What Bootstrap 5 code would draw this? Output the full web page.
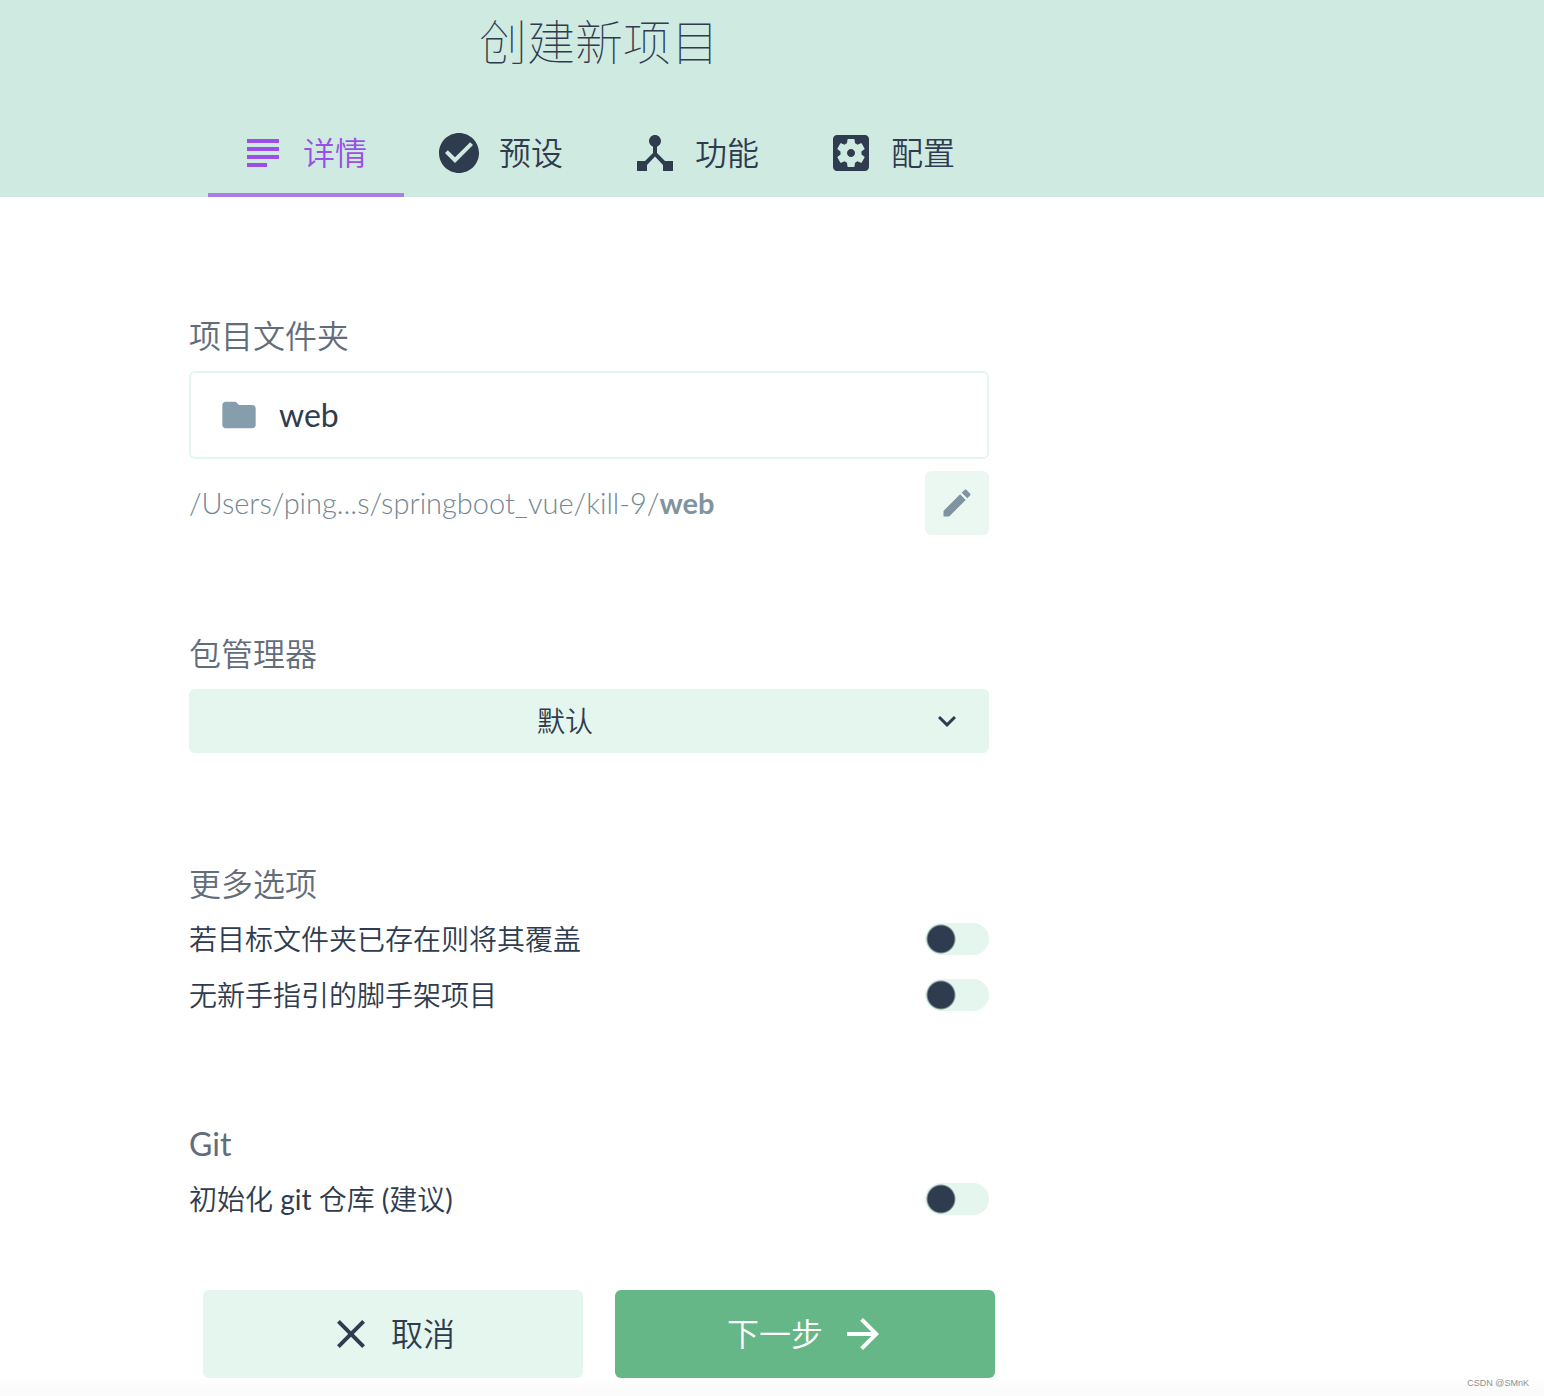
<!DOCTYPE html>
<html lang="zh-CN">
<head>
<meta charset="utf-8">
<meta name="viewport" content="width=device-width, initial-scale=1">
<title>创建新项目</title>
<link href="https://cdn.jsdelivr.net/npm/bootstrap@5.3.0/dist/css/bootstrap.min.css" rel="stylesheet">
<style>
:root { --ink: #2f3c4f; --soft: #626d7c; --mint: #e4f6ed; --slate: #8093a0; }
body { font-family: Lato, "Noto Sans CJK SC", sans-serif; color: var(--ink); min-height: 100vh; background: linear-gradient(to top, #f9f9f9 0, #fff 20px) no-repeat #fff; }
svg { display: block; fill: currentColor; flex: none; }
.shell { max-width: 1200px; }
.top-band { background: #cfeae0; }
.page-title { font-size: 48px; line-height: 72px; font-weight: 100; padding: 6px 2px 31px 0; }
.wizard-tabs .nav-link { width: 196px; height: 88px; padding: 4px 6px 0 0; gap: 16px; border-radius: 0; border-bottom: 4px solid transparent; color: var(--ink); font-size: 32px; line-height: 40px; font-weight: 350; }
.wizard-tabs .nav-link.active { color: #9b4ee8; border-color: #a87fe6; }
.form-body { padding: 119px 22px 0 0; }
.form-inner { max-width: 800px; }
.group-title { display: block; font-size: 32px; line-height: 40px; font-weight: 350; color: var(--soft); margin: 0; }
.latin { font-weight: 400; }
.field-box { margin-top: 15px; height: 88px; padding: 0 28px; gap: 20px; border: 2px solid var(--mint); border-radius: 6px; color: #869eac; }
.field-box input { font-size: 32px; font-weight: 400; color: var(--ink); padding: 0; box-shadow: none; background: none; }
.path-line { margin-top: 12px; font-size: 29px; line-height: 40px; font-weight: 300; color: #738794; }
.path-line b { font-weight: 700; color: var(--slate); }
.edit-btn { width: 64px; height: 64px; background: #ebf8f2; border-radius: 6px; color: var(--slate); }
.section-gap { margin-top: 99px; }
.section-gap-lg { margin-top: 111px; }
.section-gap-xl { margin-top: 101px; }
.pick { margin-top: 15px; }
.pick select { height: 64px; border: 0; border-radius: 6px; background: var(--mint); color: var(--ink); font-size: 28px; font-weight: 350; text-align: center; text-align-last: center; padding: 0 48px 0 0; }
.pick svg { position: absolute; right: 24px; top: 14px; pointer-events: none; }
.option-list { margin-top: 7px; }
.option-row { height: 56px; font-size: 28px; line-height: 40px; font-weight: 350; }
.option-row .form-check-input { width: 64px; height: 32px; margin: 0; float: none; border: 0; border-radius: 16px; background: radial-gradient(circle at 16px 16px, var(--ink) 13px, transparent 15px) var(--mint); }
.option-row .form-check-input:checked { background: radial-gradient(circle at 48px 16px, #fff 13px, transparent 15px) #65b787; }
.actions { max-width: 794px; padding-top: 63px; padding-bottom: 18px; padding-right: 2px; gap: 32px; }
.actions .btn { height: 88px; flex: 1 1 380px; gap: 16px; border: 0; border-radius: 6px; font-size: 32px; line-height: 40px; font-weight: 350; }
.actions .btn-cancel { background: var(--mint); color: var(--ink); padding: 0 4px 0 0; }
.actions .btn-next { background: #65b787; color: #fff; padding: 0 0 0 4px; }
.credit { position: absolute; right: 15px; bottom: 6px; font: 9px/14px "Liberation Sans", sans-serif; color: #909090; }
</style>
</head>
<body class="position-relative">
<header class="top-band">
  <div class="shell">
    <h1 class="page-title text-center m-0">创建新项目</h1>
    <nav class="nav wizard-tabs justify-content-center" aria-label="步骤">
      <a class="nav-link active d-flex align-items-center justify-content-center" href="#" aria-current="step"><svg width="48" height="48" viewBox="0 0 24 24"><path d="M14 17H4v2h10v-2zm6-8H4v2h16V9zM4 15h16v-2H4v2zM4 5v2h16V5H4z"/></svg><span>详情</span></a>
      <a class="nav-link d-flex align-items-center justify-content-center" href="#"><svg width="48" height="48" viewBox="0 0 24 24"><path d="M12 2C6.48 2 2 6.48 2 12s4.48 10 10 10 10-4.48 10-10S17.52 2 12 2zm-2 15l-5-5 1.41-1.41L10 14.17l7.59-7.59L19 8l-9 9z"/></svg><span>预设</span></a>
      <a class="nav-link d-flex align-items-center justify-content-center" href="#"><svg width="48" height="48" viewBox="0 0 24 24"><path d="M17 16l-4-4V8.82C14.16 8.4 15 7.3 15 6c0-1.66-1.34-3-3-3S9 4.34 9 6c0 1.3.84 2.4 2 2.82V12l-4 4H3v5h5v-3.05l4-4.2 4 4.2V21h5v-5h-4z"/></svg><span>功能</span></a>
      <a class="nav-link d-flex align-items-center justify-content-center" href="#"><svg width="48" height="48" viewBox="0 0 24 24"><path d="M12 10c-1.1 0-2 .9-2 2s.9 2 2 2 2-.9 2-2-.9-2-2-2zm7-7H5c-1.11 0-2 .9-2 2v14c0 1.1.89 2 2 2h14c1.11 0 2-.9 2-2V5c0-1.1-.89-2-2-2zm-1.75 9c0 .23-.02.46-.05.68l1.48 1.16c.13.11.17.3.08.45l-1.4 2.42c-.09.15-.27.21-.43.15l-1.74-.7c-.36.28-.76.51-1.18.69l-.26 1.85c-.03.17-.18.3-.35.3h-2.8c-.17 0-.32-.13-.35-.29l-.26-1.85c-.43-.18-.82-.41-1.18-.69l-1.74.7c-.16.06-.34 0-.43-.15l-1.4-2.42c-.09-.15-.05-.34.08-.45l1.48-1.16c-.03-.23-.05-.46-.05-.69 0-.23.02-.46.05-.68l-1.48-1.16c-.13-.11-.17-.3-.08-.45l1.4-2.42c.09-.15.27-.21.43-.15l1.74.7c.36-.28.76-.51 1.18-.69l.26-1.85c.03-.17.18-.3.35-.3h2.8c.17 0 .32.13.35.29l.26 1.85c.43.18.82.41 1.18.69l1.74-.7c.16-.06.34 0 .43.15l1.4 2.42c.09.15.05.34-.08.45l-1.48 1.16c.03.23.05.46.05.69z"/></svg><span>配置</span></a>
    </nav>
  </div>
</header>
<main class="shell">
  <form>
    <div class="form-body">
      <div class="form-inner mx-auto">
        <section>
          <label class="group-title" for="folder">项目文件夹</label>
          <div class="field-box d-flex align-items-center">
            <svg width="40" height="40" viewBox="0 0 24 24"><path d="M10 4H4c-1.1 0-1.99.9-1.99 2L2 18c0 1.1.9 2 2 2h16c1.1 0 2-.9 2-2V8c0-1.1-.9-2-2-2h-8l-2-2z"/></svg>
            <input class="form-control border-0" id="folder" type="text" value="web">
          </div>
          <div class="path-line d-flex align-items-center justify-content-between">
            <span>/Users/ping...s/springboot_vue/kill-9/<b>web</b></span>
            <button class="btn edit-btn border-0 p-0 d-flex align-items-center justify-content-center" type="button" aria-label="编辑"><svg width="36" height="36" viewBox="0 0 24 24"><path d="M3 17.25V21h3.75L17.81 9.94l-3.75-3.75L3 17.25zM20.71 7.04c.39-.39.39-1.02 0-1.41l-2.34-2.34c-.39-.39-1.02-.39-1.41 0l-1.83 1.83 3.75 3.75 1.83-1.83z"/></svg></button>
          </div>
        </section>
        <section class="section-gap">
          <label class="group-title" for="manager">包管理器</label>
          <div class="pick position-relative">
            <select class="form-select" id="manager"><option>默认</option></select>
            <svg width="36" height="36" viewBox="0 0 24 24"><path d="M7.41 8.59L12 13.17l4.59-4.58L18 10l-6 6-6-6 1.41-1.41z"/></svg>
          </div>
        </section>
        <section class="section-gap-lg">
          <h2 class="group-title">更多选项</h2>
          <div class="option-list">
            <div class="option-row form-switch d-flex align-items-center justify-content-between p-0"><label for="overwrite">若目标文件夹已存在则将其覆盖</label><input class="form-check-input" type="checkbox" role="switch" id="overwrite"></div>
            <div class="option-row form-switch d-flex align-items-center justify-content-between p-0"><label for="bare">无新手指引的脚手架项目</label><input class="form-check-input" type="checkbox" role="switch" id="bare"></div>
          </div>
        </section>
        <section class="section-gap-xl">
          <h2 class="group-title latin">Git</h2>
          <div class="option-list">
            <div class="option-row form-switch d-flex align-items-center justify-content-between p-0"><label for="git">初始化<span class="latin"> git </span>仓库<span class="latin"> (</span>建议<span class="latin">)</span></label><input class="form-check-input" type="checkbox" role="switch" id="git"></div>
          </div>
        </section>
      </div>
    </div>
    <div class="actions d-flex mx-auto">
      <button class="btn btn-cancel d-flex align-items-center justify-content-center" type="button"><svg width="48" height="48" viewBox="0 0 24 24"><path d="M19 6.41L17.59 5 12 10.59 6.41 5 5 6.41 10.59 12 5 17.59 6.41 19 12 13.41 17.59 19 19 17.59 13.41 12z"/></svg><span>取消</span></button>
      <button class="btn btn-next d-flex align-items-center justify-content-center" type="submit"><span>下一步</span><svg width="48" height="48" viewBox="0 0 24 24"><path d="M12 4l-1.41 1.41L16.17 11H4v2h12.17l-5.58 5.59L12 20l8-8z"/></svg></button>
    </div>
  </form>
</main>
<small class="credit">CSDN @SMnK</small>
<script src="https://cdn.jsdelivr.net/npm/bootstrap@5.3.0/dist/js/bootstrap.bundle.min.js"></script>
</body>
</html>
